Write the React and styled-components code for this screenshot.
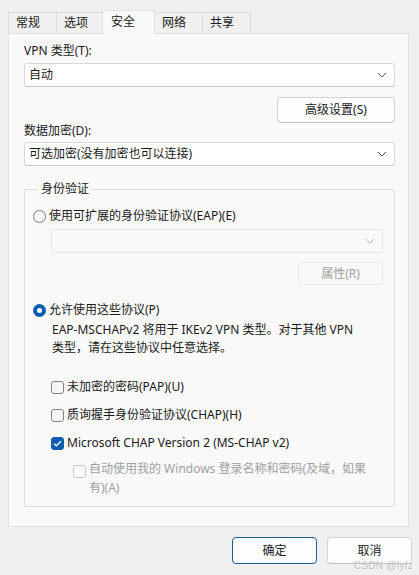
import React from "react";
import styled, { createGlobalStyle, css } from "styled-components";

const GlobalStyle = createGlobalStyle`
  html, body {
    margin: 0;
    padding: 0;
    background: #f0f0f0;
  }
  * {
    box-sizing: border-box;
  }
`;

const Dialog = styled.div`
  position: relative;
  width: 419px;
  height: 575px;
  padding: 10px 10px 0 8px;
  background: #f0f0f0;
  font-family: "Noto Sans", "Noto Sans CJK SC", sans-serif;
  font-size: 12px;
  line-height: 16px;
  color: #1a1a1a;
  overflow: hidden;
`;

const TabBar = styled.div`
  display: flex;
  align-items: flex-end;
  height: 23px;
`;

const Tab = styled.div`
  height: 21px;
  padding: 2px 16px 0 7px;
  margin-right: -1px;
  background: #f0f0f0;
  border: 1px solid #dadada;
  border-bottom: none;
  white-space: nowrap;

  ${(p) =>
    p.$active &&
    css`
      position: relative;
      z-index: 1;
      height: 24px;
      margin: 0 -1px -1px -2px;
      padding: 3px 19px 0 8px;
      background: #f9f9f9;
      border-color: #e0e0e0;
    `}
`;

const Panel = styled.div`
  height: 494px;
  padding: 9px 13px 0 15px;
  background: #f9f9f9;
  border: 1px solid #e2e2e2;
`;

const Label = styled.div`
  margin-bottom: ${(p) => p.$gap || 4}px;
`;

const Select = styled.div`
  display: flex;
  align-items: center;
  justify-content: space-between;
  height: 24px;
  padding: 0 7px 0 4px;
  background: ${(p) => (p.$disabled ? "#f9f9f9" : "#ffffff")};
  border: 1px solid ${(p) => (p.$disabled ? "#e6e6e6" : "#d8d8d8")};
  border-bottom-color: ${(p) => (p.$disabled ? "#e6e6e6" : "#c4c4c4")};
  border-radius: 3px;
  margin: ${(p) => p.$margin || "0"};
`;

const Chevron = ({ color = "#555" }) => (
  <svg width="10" height="6" viewBox="0 0 10 6">
    <path d="M1 1 L5 5 L9 1" fill="none" stroke={color} strokeWidth="1" />
  </svg>
);

const ButtonRow = styled.div`
  display: flex;
  justify-content: flex-end;
  margin: ${(p) => p.$margin || "0"};
`;

const Button = styled.div`
  display: flex;
  align-items: center;
  justify-content: center;
  width: ${(p) => p.$width || 85}px;
  height: ${(p) => p.$height || 26}px;
  background: ${(p) => (p.$disabled ? "#f9f9f9" : "#fdfdfd")};
  color: ${(p) => (p.$disabled ? "#a0a0a0" : "#1a1a1a")};
  border: 1px solid ${(p) => (p.$disabled ? "#e8e8e8" : "#d3d3d3")};
  border-bottom-color: ${(p) => (p.$disabled ? "#e8e8e8" : "#bdbdbd")};
  border-radius: 4px;

  ${(p) =>
    p.$primary &&
    css`
      border: 1px solid #1b5d96;
      border-bottom-color: #1b5d96;
      box-shadow: inset 0 0 0 1px #ffffff;
    `}
`;

const Group = styled.fieldset`
  margin: 15px 0 0;
  padding: 11px 11px 9px 8px;
  border: 1px solid #dcdcdc;
  border-radius: 2px;
  min-inline-size: 0;
`;

const Legend = styled.legend`
  margin-left: 5px;
  padding: 0 3px;
  line-height: 16px;
`;

const OptionRow = styled.div`
  display: flex;
  align-items: ${(p) => (p.$top ? "flex-start" : "center")};
  gap: 3px;
  margin: ${(p) => p.$margin || "0"};
  color: ${(p) => (p.$disabled ? "#a0a0a0" : "inherit")};
  line-height: ${(p) => (p.$lh ? p.$lh : 16)}px;
`;

const Radio = styled.span`
  flex: none;
  width: 13px;
  height: 13px;
  border-radius: 50%;
  ${(p) =>
    p.$checked
      ? css`
          background: #ffffff;
          border: 4px solid #0a5db0;
        `
      : css`
          background: #f7f7f7;
          border: 1px solid #7a7a7a;
        `}
`;

const Box = styled.span`
  flex: none;
  display: flex;
  align-items: center;
  justify-content: center;
  width: 13px;
  height: 13px;
  border-radius: 3px;
  margin-top: ${(p) => p.$offset || 0}px;
  ${(p) =>
    p.$checked
      ? css`
          background: #0a5db0;
          border: 1px solid #0a5db0;
        `
      : css`
          background: ${p.$disabled ? "#fafafa" : "#f6f6f6"};
          border: 1px solid ${p.$disabled ? "#c8c8c8" : "#858585"};
        `}
`;

const Check = () => (
  <svg width="9" height="7" viewBox="0 0 9 7">
    <path d="M1 3.6 L3.3 5.8 L8 1.2" fill="none" stroke="#fff" strokeWidth="1.3" />
  </svg>
);

const Description = styled.div`
  margin: 3px 0 0 19px;
  line-height: 18px;
`;

const CheckList = styled.div`
  display: flex;
  flex-direction: column;
  gap: 12px;
  margin: 22px 0 0 18px;
`;

const Footer = styled.div`
  display: flex;
  justify-content: flex-end;
  gap: 10px;
  margin: 10px -3px 0 0;
`;

const Watermark = styled.span`
  position: absolute;
  right: 6px;
  bottom: 4px;
  font-family: "Liberation Sans", sans-serif;
  font-size: 10px;
  line-height: 10px;
  color: #c4c4c4;
  letter-spacing: 0.3px;
`;

const tabs = ["常规", "选项", "安全", "网络", "共享"];

export default function App() {
  return (
    <>
      <GlobalStyle />
      <Dialog>
        <TabBar>
          {tabs.map((t) => (
            <Tab key={t} $active={t === "安全"}>
              {t}
            </Tab>
          ))}
        </TabBar>
        <Panel>
          <Label>VPN 类型(T):</Label>
          <Select>
            <span>自动</span>
            <Chevron />
          </Select>
          <ButtonRow $margin="10px 0 0">
            <Button $width={118} $height={26}>
              高级设置(S)
            </Button>
          </ButtonRow>
          <Label $gap={3}>数据加密(D):</Label>
          <Select>
            <span>可选加密(没有加密也可以连接)</span>
            <Chevron />
          </Select>

          <Group>
            <Legend>身份验证</Legend>
            <OptionRow>
              <Radio />
              <span>使用可扩展的身份验证协议(EAP)(E)</span>
            </OptionRow>
            <Select $disabled $margin="5px 0 0 18px">
              <span />
              <Chevron color="#c0c0c0" />
            </Select>
            <ButtonRow $margin="9px 0 0">
              <Button $disabled $width={85} $height={23}>
                属性(R)
              </Button>
            </ButtonRow>
            <OptionRow $margin="17px 0 0">
              <Radio $checked />
              <span>允许使用这些协议(P)</span>
            </OptionRow>
            <Description>
              EAP-MSCHAPv2 将用于 IKEv2 VPN 类型。对于其他 VPN
              <br />
              类型，请在这些协议中任意选择。
            </Description>
            <CheckList>
              <OptionRow>
                <Box />
                <span>未加密的密码(PAP)(U)</span>
              </OptionRow>
              <OptionRow>
                <Box />
                <span>质询握手身份验证协议(CHAP)(H)</span>
              </OptionRow>
              <OptionRow>
                <Box $checked>
                  <Check />
                </Box>
                <span>Microsoft CHAP Version 2 (MS-CHAP v2)</span>
              </OptionRow>
              <OptionRow $top $disabled $lh={19} $margin="-4px 0 0 22px">
                <Box $disabled $offset={6} />
                <span>
                  自动使用我的 Windows 登录名称和密码(及域，如果
                  <br />
                  有)(A)
                </span>
              </OptionRow>
            </CheckList>
          </Group>
        </Panel>
        <Footer>
          <Button $primary $height={27}>
            确定
          </Button>
          <Button $height={27}>取消</Button>
        </Footer>
        <Watermark>CSDN @lyfz</Watermark>
      </Dialog>
    </>
  );
}
